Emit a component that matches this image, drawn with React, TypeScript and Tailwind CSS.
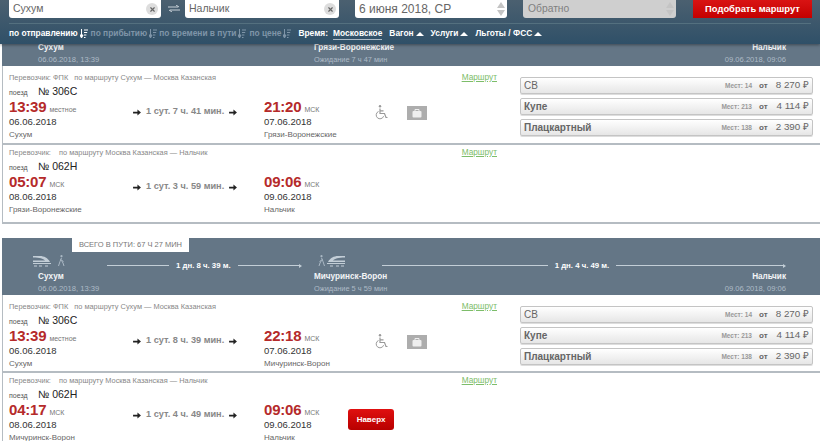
import { X } from "lucide-react";

const FARES = [
  { name: "СВ", seats: "14", price: "8 270" },
  { name: "Купе", seats: "213", price: "4 114" },
  { name: "Плацкартный", seats: "138", price: "2 390" },
];

function ArrowRight() {
  return (
    <svg width="8" height="7" viewBox="0 0 9 8" className="shrink-0 text-[#222]">
      <path d="M0 3h5V0.5L9 4 5 7.5V5H0z" fill="currentColor" />
    </svg>
  );
}

function SortIcon({ active }: { active?: boolean }) {
  const color = active ? "#ffffff" : "#7f95a8";
  return (
    <svg width="8" height="10" viewBox="0 0 8 10" className="ml-[2px] shrink-0">
      <path d="M1.5 0v7M0 6l1.5 3L3 6z" stroke={color} fill={color} strokeWidth="1" />
      <path d="M4 1h4M4 3.5h3.2M4 6h2.4M4 8.5h1.5" stroke={color} strokeWidth="1" />
    </svg>
  );
}

function Caret() {
  return <span className="ml-[2px] inline-block h-0 w-0 border-x-[4px] border-b-[4px] border-x-transparent border-b-white" />;
}

function WheelchairIcon() {
  return (
    <svg width="13" height="15" viewBox="0 0 13 15" className="shrink-0">
      <circle cx="5" cy="1.300" r="1.200" fill="#999" />
      <path d="M5 3.500V8.500H9.500L11 12.500H12.500M5 5.800H8.500" stroke="#999" strokeWidth="1.200" fill="none" />
      <path d="M3.500 6.500A3.800 3.800 0 1 0 8.600 11.200" stroke="#999" strokeWidth="1" fill="none" />
    </svg>
  );
}

function BagIcon() {
  return (
    <span className="ml-[19px] flex h-[14px] w-[20px] shrink-0 items-center justify-center bg-[#adadad]">
      <svg width="10" height="10" viewBox="0 0 10 10">
        <path d="M3 3V1.500H7V3" stroke="#eee" fill="none" />
        <rect x="0.500" y="3" width="9" height="6.500" rx="1" fill="#eee" />
      </svg>
    </span>
  );
}

function SearchInput({ value, className }: { value: string; className: string }) {
  return (
    <div className={`flex h-[24px] items-center justify-between rounded-[3px] bg-white pl-[4px] pr-[3px] pt-[6px] text-[10.500px] text-[#666] ${className}`}>
      <span>{value}</span>
      <span className="flex h-[12px] w-[12px] items-center justify-center rounded-full bg-[#ddd]">
        <X size={7} strokeWidth={4} className="text-[#666]" />
      </span>
    </div>
  );
}

function Spinner() {
  return (
    <span className="flex flex-col gap-[2px]">
      <span className="h-0 w-0 border-x-[4px] border-b-[6px] border-x-transparent border-b-[#c4c4c4]" />
      <span className="h-0 w-0 border-x-[4px] border-t-[6px] border-x-transparent border-t-[#c4c4c4]" />
    </span>
  );
}

function TrainIcon({ flip }: { flip?: boolean }) {
  return (
    <svg width="18" height="12" viewBox="0 0 18 12" className={flip ? "-scale-x-100" : ""}>
      <path d="M0 1h7c4 0 8 2 10 6H0V5.500h12C10 3.500 7 2.500 0 2.500z" fill="#c3ced7" />
      <path d="M0 8h18v1H0zM1 10.500h3v1H1zM6 10.500h3v1H6zM12 10.500h3v1h-3z" fill="#c3ced7" />
    </svg>
  );
}

function WalkerIcon({ flip }: { flip?: boolean }) {
  return (
    <svg width="7" height="11" viewBox="0 0 7 11" className={flip ? "-scale-x-100" : ""}>
      <circle cx="3.500" cy="1.200" r="1.100" fill="#aab8c4" />
      <path d="M3.500 2.800L2 6.500 0.500 11M3.500 5.500L5 8l1 3M2.500 4.500L5.500 6.500" stroke="#aab8c4" strokeWidth="1" fill="none" />
    </svg>
  );
}

function Line({ className, arrow }: { className: string; arrow?: boolean }) {
  return (
    <span className={`flex items-center ${className}`}>
      <span className="h-px flex-1 bg-[#c3ced7]" />
      {arrow && <span className="h-0 w-0 border-y-[2px] border-l-[3px] border-y-transparent border-l-[#c3ced7]" />}
    </span>
  );
}

function Names({ middle, middleSub }: { middle: string; middleSub: string }) {
  return (
    <div className="flex h-[24px] pl-[36px] pr-[34px] leading-[12px]">
      <div className="w-[276px]">
        <div className="text-[8.200px] font-bold text-[#f2f4f6]">Сухум</div>
        <div className="text-[7.600px] text-[#aebbc6]">06.06.2018, 13:39</div>
      </div>
      <div className="flex-1">
        <div className="text-[8.200px] font-bold text-[#f2f4f6]">{middle}</div>
        <div className="text-[7.400px] text-[#aebbc6]">{middleSub}</div>
      </div>
      <div className="text-right">
        <div className="text-[8.200px] font-bold text-[#f2f4f6]">Нальчик</div>
        <div className="text-[7.600px] text-[#aebbc6]">09.06.2018, 09:06</div>
      </div>
    </div>
  );
}

function FareButton({ name, seats, price }: { name: string; seats: string; price: string }) {
  return (
    <div className="flex h-[17px] items-center justify-between rounded-[2px] border border-[#c4c4c4] bg-gradient-to-b from-white to-[#e6e6e6] pl-[3px] pr-[3px] text-[#666] shadow-[0_1px_0_#ddd]">
      <span className={`text-[10px] ${name === "СВ" ? "" : "font-bold"}`}>{name}</span>
      <span className="flex items-center whitespace-nowrap">
        <span className="text-[6.500px] font-bold text-[#999]">Мест: {seats}</span>
        <span className="ml-[7px] w-[9px] text-[8px] font-bold">от</span>
        <span className="w-[41px] text-right text-[9.800px]">{price} ₽</span>
      </span>
    </div>
  );
}

interface CardProps {
  route: string;
  carrier: string;
  number: string;
  depTime: string;
  depZone: string;
  depDate: string;
  depStation: string;
  duration: string;
  arrTime: string;
  arrDate: string;
  arrStation: string;
  amenities?: boolean;
  top?: boolean;
  fares?: boolean;
  className: string;
}

function TrainCard(props: CardProps) {
  return (
    <div className={`ml-[2px] flex shrink-0 border-b-2 border-l border-[#b5bcc2] bg-white pl-[6px] ${props.className}`}>
      <div className="w-[488px]">
        <div className="flex justify-between text-[7.400px] leading-[11px] text-[#888]">
          <span>
            Перевозчик: {props.carrier}
            <span className="ml-[6px]">по маршруту {props.route}</span>
          </span>
          <span className="text-[8.300px] text-[#7dbd6a] underline">Маршрут</span>
        </div>
        <div className="mt-[1px] flex h-[15px] items-center">
          <span className="w-[29px] pt-[3px] text-[7px] text-[#555]">поезд</span>
          <span className="text-[10.500px] leading-[15px] text-[#222]">№ {props.number}</span>
        </div>
        <div className="flex">
          <div className="w-[124px]">
            <div className="flex h-[16px] items-baseline gap-[3px]">
              <span className="text-[15px] font-bold leading-[16px] tracking-[-0.2px] text-[#b52a2a]">{props.depTime}</span>
              <span className="text-[7px] text-[#777]">{props.depZone}</span>
            </div>
            <div className="mt-[1px] text-[9.500px] leading-[12px] text-[#333]">{props.depDate}</div>
            <div className="mt-[1px] text-[8px] leading-[12px] text-[#666]">{props.depStation}</div>
          </div>
          <div className="flex h-[26px] w-[131px] items-center gap-[5px] text-[9.200px] font-bold text-[#888]">
            <ArrowRight />
            <span>{props.duration}</span>
            <ArrowRight />
          </div>
          <div className="w-[84px]">
            <div className="flex h-[16px] items-baseline gap-[3px]">
              <span className="text-[15px] font-bold leading-[16px] tracking-[-0.2px] text-[#b52a2a]">{props.arrTime}</span>
              <span className="text-[7px] text-[#777]">МСК</span>
            </div>
            <div className="mt-[1px] text-[9.500px] leading-[12px] text-[#333]">{props.arrDate}</div>
            <div className="mt-[1px] whitespace-nowrap text-[8px] leading-[12px] text-[#666]">{props.arrStation}</div>
          </div>
          {props.amenities && (
            <div className="ml-[27px] flex h-[28px] items-center pb-[1px]">
              <WheelchairIcon />
              <BagIcon />
            </div>
          )}
          {props.top && (
            <div className="mt-[7px] flex h-[21px] w-[46px] items-center justify-center rounded-[3px] bg-gradient-to-b from-[#e01010] to-[#b80000] text-[8px] font-bold text-white">
              Наверх
            </div>
          )}
        </div>
      </div>
      {props.fares && (
        <div className="ml-[23px] mt-[5px] flex w-[293px] flex-col gap-[4px]">
          {FARES.map((f) => (
            <FareButton key={f.name} {...f} />
          ))}
        </div>
      )}
    </div>
  );
}

export default function App() {
  return (
    <div className="flex h-[441px] w-[820px] flex-col overflow-hidden bg-white font-['Liberation_Sans',Arial,sans-serif]">
      {/* Search header */}
      <header className="relative z-10 h-[44px] shrink-0 bg-gradient-to-b from-[#4b6070] to-[#2f5068] shadow-[0_1px_3px_rgba(0,0,0,0.4)]">
        <div className="-mt-[6px] flex h-[24px] items-center pl-[9px]">
          <SearchInput value="Сухум" className="w-[152px]" />
          <svg width="12" height="7" viewBox="0 0 12 7" className="ml-[7px] mt-[5px]">
            <path d="M0 2h10M8 0l3 2M12 5H2M4 7L1 5" stroke="#c9d2d9" fill="none" />
          </svg>
          <SearchInput value="Нальчик" className="ml-[5px] w-[154px]" />
          <div className="ml-[16px] flex h-[24px] w-[152px] items-center justify-between rounded-[3px] bg-white pl-[4px] pr-[2px] pt-[6px] text-[12px] text-[#666]">
            6 июня 2018, СР
            <Spinner />
          </div>
          <div className="ml-[16px] flex h-[24px] w-[153px] items-center justify-between rounded-[3px] bg-[#cfcfcf] pl-[5px] pr-[2px] pt-[6px] text-[10.300px] text-[#808080]">
            Обратно
            <Spinner />
          </div>
          <div className="ml-[17px] flex h-[24px] w-[119px] items-center justify-center bg-gradient-to-b from-[#e01818] to-[#c40000] pt-[6px] text-[9.400px] font-bold text-white">
            Подобрать маршрут
          </div>
        </div>
        <div className="mx-[9px] mt-[5px] h-px bg-[#54707f]" />
        <div className="flex h-[19px] items-center pl-[9px] text-[8.400px] font-bold text-[#7f95a8]">
          <span className="text-white">по отправлению</span>
          <SortIcon active />
          <span className="ml-[3px]">по прибытию</span>
          <SortIcon />
          <span className="ml-[2px]">по времени в пути</span>
          <SortIcon />
          <span className="ml-[3px]">по цене</span>
          <SortIcon />
          <span className="ml-[7px] text-white">Время:</span>
          <span className="ml-[5px] border-b border-[#aebbc6] leading-[11px] text-white">Московское</span>
          <span className="ml-[7px] text-white">Вагон</span>
          <Caret />
          <span className="ml-[7px] text-white">Услуги</span>
          <Caret />
          <span className="ml-[7px] text-white">Льготы / ФСС</span>
          <Caret />
        </div>
      </header>

      {/* First route */}
      <div className="ml-[2px] h-[22px] shrink-0 bg-[#647686]">
        <div className="-mt-[2px]">
          <Names middle="Грязи-Воронежские" middleSub="Ожидание 7 ч 47 мин" />
        </div>
      </div>
      <TrainCard
        className="h-[79px] pt-[6px]"
        carrier="ФПК"
        route="Сухум — Москва Казанская"
        number="306С"
        depTime="13:39"
        depZone="местное"
        depDate="06.06.2018"
        depStation="Сухум"
        duration="1 сут. 7 ч. 41 мин."
        arrTime="21:20"
        arrDate="07.06.2018"
        arrStation="Грязи-Воронежские"
        amenities
        fares
      />
      <TrainCard
        className="h-[79px] pt-[2px]"
        carrier=""
        route="Москва Казанская — Нальчик"
        number="062Н"
        depTime="05:07"
        depZone="МСК"
        depDate="08.06.2018"
        depStation="Грязи-Воронежские"
        duration="1 сут. 3 ч. 59 мин."
        arrTime="09:06"
        arrDate="09.06.2018"
        arrStation="Нальчик"
      />

      {/* Second route */}
      <div className="ml-[2px] mt-[14px] h-[57px] shrink-0 bg-[#647686]">
        <div className="ml-[70px] flex h-[14px] w-[117px] items-center justify-center bg-white text-[7.500px] text-[#777]">
          ВСЕГО В ПУТИ: 67 Ч 27 МИН
        </div>
        <div className="flex h-[19px] items-center pl-[31px] pt-[8px]">
          <span className="mb-[10px] flex"><TrainIcon /></span>
          <span className="mb-[10px] ml-[7px] flex"><WalkerIcon /></span>
          <Line className="ml-[42px] w-[62px]" />
          <span className="mx-[7px] text-[7.800px] font-bold text-white">1 дн. 8 ч. 39 м.</span>
          <Line className="w-[64px]" arrow />
          <span className="mb-[10px] ml-[16px] flex"><WalkerIcon flip /></span>
          <span className="mb-[10px] ml-[2px] flex"><TrainIcon flip /></span>
          <Line className="ml-[37px] w-[166px]" />
          <span className="mx-[7px] text-[7.800px] font-bold text-white">1 дн. 4 ч. 49 м.</span>
          <Line className="w-[170px]" arrow />
        </div>
        <Names middle="Мичуринск-Ворон" middleSub="Ожидание 5 ч 59 мин" />
      </div>
      <TrainCard
        className="h-[78px] pt-[6px]"
        carrier="ФПК"
        route="Сухум — Москва Казанская"
        number="306С"
        depTime="13:39"
        depZone="местное"
        depDate="06.06.2018"
        depStation="Сухум"
        duration="1 сут. 8 ч. 39 мин."
        arrTime="22:18"
        arrDate="07.06.2018"
        arrStation="Мичуринск-Ворон"
        amenities
        fares
      />
      <TrainCard
        className="h-[79px] pt-[2px]"
        carrier=""
        route="Москва Казанская — Нальчик"
        number="062Н"
        depTime="04:17"
        depZone="МСК"
        depDate="08.06.2018"
        depStation="Мичуринск-Ворон"
        duration="1 сут. 4 ч. 49 мин."
        arrTime="09:06"
        arrDate="09.06.2018"
        arrStation="Нальчик"
        top
      />
    </div>
  );
}
